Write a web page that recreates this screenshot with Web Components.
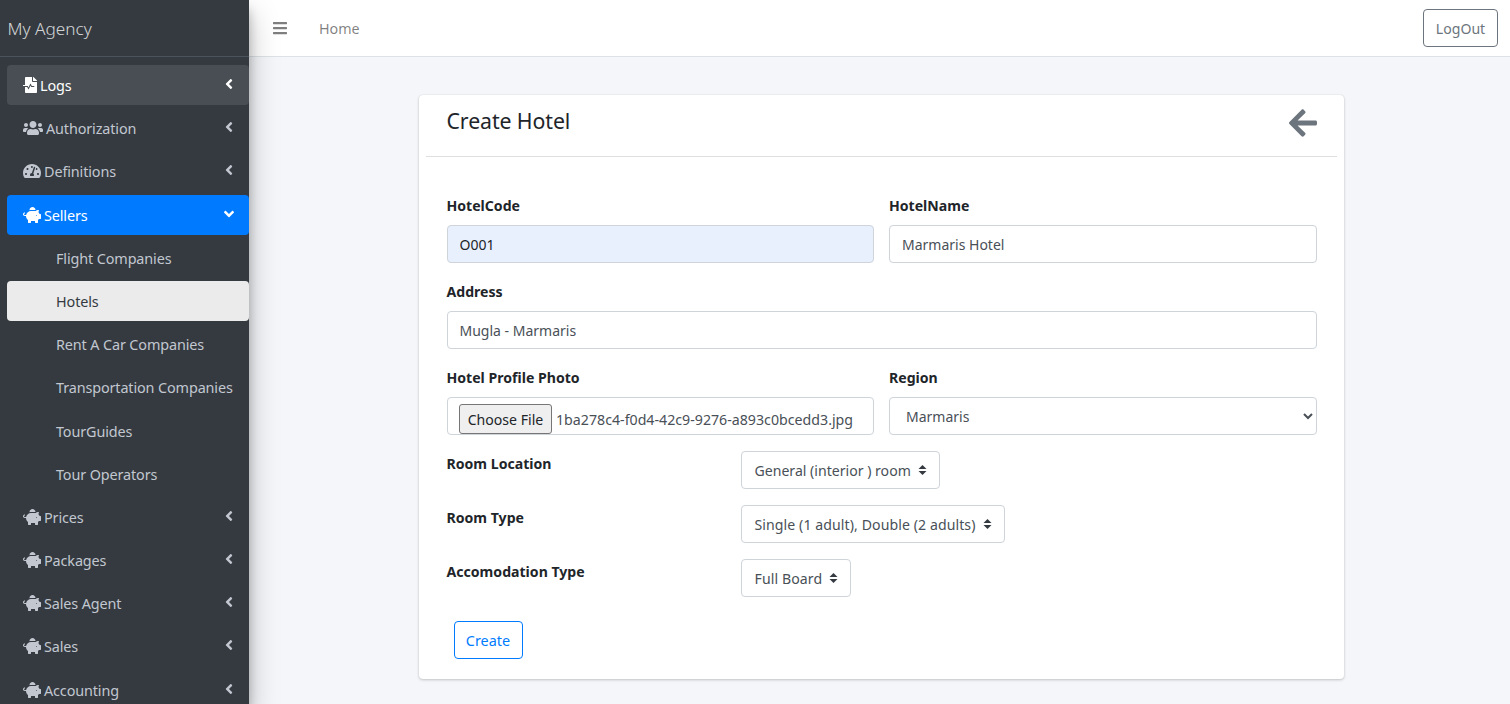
<!DOCTYPE html>
<html lang="en"><head><meta charset="utf-8"><title>Create Hotel</title>
<style>
html,body{margin:0;height:100%;overflow:hidden;background:#f4f6f9}
body{font-family:"Noto Sans","Open Sans",sans-serif;font-size:14.4px;color:#212529}
</style></head><body>
<app-shell>
  <side-bar slot="side" brand="My Agency">
    <nav-item icon="file" state="soft">Logs</nav-item>
    <nav-item icon="users">Authorization</nav-item>
    <nav-item icon="gauge">Definitions</nav-item>
    <nav-item icon="piggy" state="primary" open>Sellers</nav-item>
    <nav-item sub>Flight Companies</nav-item>
    <nav-item sub state="light">Hotels</nav-item>
    <nav-item sub>Rent A Car Companies</nav-item>
    <nav-item sub>Transportation Companies</nav-item>
    <nav-item sub>TourGuides</nav-item>
    <nav-item sub>Tour Operators</nav-item>
    <nav-item icon="piggy">Prices</nav-item>
    <nav-item icon="piggy">Packages</nav-item>
    <nav-item icon="piggy">Sales Agent</nav-item>
    <nav-item icon="piggy">Sales</nav-item>
    <nav-item icon="piggy">Accounting</nav-item>
  </side-bar>
  <top-bar slot="top"></top-bar>
  <form-card title="Create Hotel">
    <div style="display:grid;grid-template-columns:427.5px 428px;column-gap:15px">
      <form-field label="HotelCode"><text-box value="O001" autofill></text-box></form-field>
      <form-field label="HotelName"><text-box value="Marmaris Hotel"></text-box></form-field>
      <form-field label="Address" style="grid-column:1/3"><text-box value="Mugla - Marmaris"></text-box></form-field>
      <form-field label="Hotel Profile Photo"><file-box name="1ba278c4-f0d4-42c9-9276-a893c0bcedd3.jpg"></file-box></form-field>
      <form-field label="Region"><region-select value="Marmaris"></region-select></form-field>
    </div>
    <option-row label="Room Location" value="General (interior ) room"></option-row>
    <option-row label="Room Type" value="Single (1 adult), Double (2 adults)" track=".085"></option-row>
    <option-row label="Accomodation Type" value="Full Board" track=".1"></option-row>
    <submit-button>Create</submit-button>
  </form-card>
</app-shell>
<script>
const ICONS={
 file:[448,"M288 136V0H88C74.7 0 64 10.7 64 24v232H8c-4.4 0-8 3.6-8 8v16c0 4.4 3.6 8 8 8h140.9c3 0 5.8 1.7 7.2 4.4l19.9 39.8 56.8-113.7c2.9-5.9 11.4-5.9 14.3 0l34.7 69.5H352c8.8 0 16 7.2 16 16s-7.2 16-16 16h-89.9L240 275.8l-56.8 113.7c-2.9 5.9-11.4 5.9-14.3 0L134.1 320H64v168c0 13.3 10.7 24 24 24h336c13.3 0 24-10.7 24-24V160H312c-13.2 0-24-10.8-24-24zm153-31L343.1 7c-4.5-4.5-10.6-7-17-7H320v128h128v-6.1c0-6.3-2.5-12.4-7-16.9z"],
 users:[640,"M96 224c35.3 0 64-28.7 64-64s-28.7-64-64-64-64 28.7-64 64 28.7 64 64 64zm448 0c35.3 0 64-28.7 64-64s-28.7-64-64-64-64 28.7-64 64 28.7 64 64 64zm32 32h-64c-17.6 0-33.5 7.1-45.1 18.6 40.3 22.1 68.9 62 75.1 109.4h66c17.7 0 32-14.3 32-32v-32c0-35.3-28.7-64-64-64zm-256 0c61.9 0 112-50.1 112-112S381.9 32 320 32 208 82.1 208 144s50.1 112 112 112zm76.8 32h-8.3c-20.8 10-43.9 16-68.5 16s-47.6-6-68.5-16h-8.3C179.6 288 128 339.6 128 403.2V432c0 26.5 21.5 48 48 48h288c26.5 0 48-21.5 48-48v-28.8c0-63.6-51.6-115.2-115.2-115.2zm-223.7-13.4C161.5 263.1 145.6 256 128 256H64c-35.3 0-64 28.7-64 64v32c0 17.7 14.3 32 32 32h65.9c6.3-47.4 34.9-87.3 75.2-109.4z"],
 gauge:[576,"M288 32C128.94 32 0 160.94 0 320c0 52.8 14.25 102.26 39.06 144.8 5.61 9.62 16.3 15.2 27.44 15.2h443c11.14 0 21.83-5.58 27.44-15.2C561.75 422.26 576 372.8 576 320c0-159.06-128.94-288-288-288zm0 64c14.71 0 26.58 10.13 30.32 23.65-1.11 2.26-2.64 4.23-3.45 6.67l-9.22 27.67c-5.13 3.49-10.97 6.01-17.64 6.01-17.67 0-32-14.33-32-32S270.33 96 288 96zM96 384c-17.67 0-32-14.33-32-32s14.33-32 32-32 32 14.33 32 32-14.33 32-32 32zm48-160c-17.67 0-32-14.33-32-32s14.33-32 32-32 32 14.33 32 32-14.33 32-32 32zm246.77-72.41l-61.33 184C343.13 347.33 352 364.54 352 384c0 11.72-3.38 22.55-8.88 32H232.88c-5.5-9.45-8.88-20.28-8.88-32 0-33.94 26.5-61.43 59.9-63.59l61.34-184.01c4.17-12.56 17.73-19.45 30.36-15.17 12.57 4.19 19.35 17.79 15.17 30.36zm14.66 57.2l15.52-46.55c3.47-1.29 7.13-2.23 11.05-2.23 17.67 0 32 14.33 32 32s-14.33 32-32 32c-11.38-.01-20.89-6.28-26.57-15.22zM480 384c-17.67 0-32-14.33-32-32s14.33-32 32-32 32 14.33 32 32-14.33 32-32 32z"],
 piggy:[576,"M560 224h-29.5c-8.8-20-21.6-37.7-37.4-52.5L512 96h-32c-29.4 0-55.4 13.5-73 34.3-7.6-1.1-15.1-2.3-23-2.3H256c-77.4 0-141.9 55-156.8 128H56c-14.8 0-26.5-13.5-23.5-28.8C34.7 215.8 45.4 208 57 208h1c3.3 0 6-2.7 6-6v-20c0-3.3-2.7-6-6-6-28.5 0-53.9 20.4-57.5 48.6C-3.9 258.8 22.7 288 56 288h40c0 52.2 25.4 98.1 64 127.3V496c0 8.8 7.2 16 16 16h64c8.8 0 16-7.2 16-16v-48h128v48c0 8.8 7.2 16 16 16h64c8.8 0 16-7.2 16-16v-80.7c11.8-8.9 22.3-19.4 31.3-31.3H560c8.8 0 16-7.2 16-16V240c0-8.8-7.2-16-16-16zm-128 64c-8.8 0-16-7.2-16-16s7.2-16 16-16 16 7.2 16 16-7.2 16-16 16zM256 96h128c5.4 0 10.7.4 15.9.8 0-.3.1-.5.1-.8 0-53-43-96-96-96s-96 43-96 96c0 2.1.5 4.1.6 6.2 15.2-3.9 31-6.2 47.4-6.2z"],
 left:[256,"M31.7 239l136-136c9.4-9.4 24.6-9.4 33.9 0l22.6 22.6c9.4 9.4 9.4 24.6 0 33.9L127.9 256l96.4 96.4c9.4 9.4 9.4 24.6 0 33.9L201.7 409c-9.4 9.4-24.6 9.4-33.9 0l-136-136c-9.5-9.4-9.5-24.6-.1-34z"],
 down:[320,"M143 352.3L7 216.3c-9.4-9.4-9.4-24.6 0-33.9l22.6-22.6c9.4-9.4 24.6-9.4 33.9 0l96.4 96.4 96.4-96.4c9.4-9.4 24.6-9.4 33.9 0l22.6 22.6c9.4 9.4 9.4 24.6 0 33.9l-136 136c-9.2 9.4-24.4 9.4-33.8 0z"],
 bars:[448,"M16 132h416c8.837 0 16-7.163 16-16V76c0-8.837-7.163-16-16-16H16C7.163 60 0 67.163 0 76v40c0 8.837 7.163 16 16 16zm0 160h416c8.837 0 16-7.163 16-16v-40c0-8.837-7.163-16-16-16H16c-8.837 0-16 7.163-16 16v40c0 8.837 7.163 16 16 16zm0 160h416c8.837 0 16-7.163 16-16v-40c0-8.837-7.163-16-16-16H16c-8.837 0-16 7.163-16 16v40c0 8.837 7.163 16 16 16z"],
 back:[448,"M257.5 445.1l-22.2 22.2c-9.4 9.4-24.6 9.4-33.9 0L7 273c-9.4-9.4-9.4-24.6 0-33.9L201.4 44.7c9.4-9.4 24.6-9.4 33.9 0l22.2 22.2c9.5 9.5 9.3 25-.4 34.3L136.6 216H424c13.3 0 24 10.7 24 24v32c0 13.3-10.7 24-24 24H136.6l120.5 114.8c9.8 9.3 10 24.8.4 34.3z"]
};
const svg=(n,size=16)=>{const [w,d]=ICONS[n];return `<svg width="${w/512*size}" height="${size}" viewBox="0 0 ${w} 512" fill="currentColor" aria-hidden="true" style="display:block;flex:none"><path d="${d}"/></svg>`};
const FONT='"Noto Sans","Open Sans",sans-serif';
function reg(name,render){customElements.define(name,class extends HTMLElement{
  connectedCallback(){if(this.shadowRoot)return;this.attachShadow({mode:"open"}).innerHTML=render(this)}
})}
reg("app-shell",()=>`<style>
:host{display:grid;grid-template-columns:249px 1fr;grid-template-rows:57px 1fr;height:704px;overflow:hidden}
.side{grid-row:1/3;position:relative;z-index:2;min-height:0;min-width:0}
main{min-width:0;min-height:0;overflow:hidden;padding:38px 0 0 170px}
</style><div class="side"><slot name="side"></slot></div><slot name="top"></slot><main><slot></slot></main>`);
reg("side-bar",h=>`<style>
:host{display:flex;flex-direction:column;height:704px;background:#343a40;box-shadow:0 14px 28px rgba(0,0,0,.25),0 10px 10px rgba(0,0,0,.22)}
.brand{height:56px;box-sizing:border-box;flex:none;padding:0 7.5px;display:flex;align-items:center;font-size:17.2px;font-weight:300;color:rgba(255,255,255,.8);font-family:${FONT}}
hr{margin:0;border:0;border-top:1px solid #4b545c;flex:none}
nav{display:flex;flex-direction:column;gap:3.2px;padding:8px 0 0 7px;overflow:hidden;min-height:0}
</style><div class="brand">${h.getAttribute("brand")}</div><hr><nav><slot></slot></nav>`);
reg("nav-item",h=>{
 const st=h.getAttribute("state"),sub=h.hasAttribute("sub"),ic=h.getAttribute("icon");
 const bg={soft:"rgba(255,255,255,.1)",primary:"#007bff",light:"rgba(255,255,255,.9)"}[st]||"transparent";
 const col={soft:"#fff",primary:"#fff",light:"#343a40"}[st]||"#c2c7d0";
 return `<style>
 :host{display:flex;flex:none;align-items:center;gap:3px;box-sizing:border-box;width:242px;height:40px;border-radius:4px;background:${bg};color:${col};padding:0 15px 0 ${sub?49:16}px;font:14.4px/24px ${FONT};letter-spacing:-.12px}
 .t{flex:1;white-space:nowrap;padding-top:2px}
 .c{width:10px;display:flex;justify-content:center;padding-bottom:2px}
 </style>${ic?svg(ic):""}<span class="t"><slot></slot></span>${sub?"":`<span class="c">${h.hasAttribute("open")?svg("down"):svg("left")}</span>`}`});
reg("top-bar",()=>`<style>
:host{display:flex;align-items:center;height:57px;box-sizing:border-box;background:#fff;border-bottom:1px solid #dee2e6;padding:0 12px 0 24px;font:14.3px/24px ${FONT}}
.b{color:rgba(0,0,0,.5)}
.h{margin-left:32px;color:rgba(0,0,0,.5);flex:1;padding-top:2px}
button{height:38px;width:75px;box-sizing:border-box;background:#fff;border:1px solid #6c757d;border-radius:4px;color:#6c757d;font:14.1px/24px ${FONT};padding:2px 0 0}
</style><span class="b">${svg("bars")}</span><span class="h">Home</span><button type="button">LogOut</button>`);
reg("form-card",h=>`<style>
:host{display:block;width:925px;height:584px;box-sizing:border-box;background:#fff;border-radius:4px;box-shadow:0 0 1px rgba(0,0,0,.125),0 1px 3px rgba(0,0,0,.2)}
header{height:62px;box-sizing:border-box;margin:0 7px;border-bottom:1px solid rgba(0,0,0,.125);display:flex;justify-content:space-between;padding:8px 20px 0 20.5px;color:#212529}
h3{margin:0;font:400 21.3px/36px ${FONT};letter-spacing:-.1px}
.a{color:#6c757d;height:32px;margin-top:-3px;padding-top:7px}
.body{padding:36px 27px 20px 27.5px}
</style><header><h3>${h.getAttribute("title")}</h3><span class="a">${svg("back",32)}</span></header><div class="body"><slot></slot></div>`);
reg("form-field",h=>`<style>
:host{display:block;margin-bottom:16px}
label{display:block;font:700 14.1px/24px ${FONT};padding-top:1px;margin-bottom:7px;color:#212529}
</style><label>${h.getAttribute("label")}</label><slot></slot>`);
const box=`box-sizing:border-box;height:38px;border:1px solid #ced4da;border-radius:4px;background:#fff;color:#495057;font:14px/24px ${FONT};`;
reg("text-box",h=>`<style>
:host{display:block}
input{${box}display:block;width:100%;padding:6px 12px;outline:0}
input.af{background:#e8f0fe;color:#212529}
</style><input type="text" class="${h.hasAttribute("autofill")?"af":""}" value="${h.getAttribute("value")}">`);
reg("file-box",h=>`<style>
:host{${box}display:flex;align-items:flex-start;padding:6px 12px 6px 11.5px;overflow:hidden;white-space:nowrap}
button{box-sizing:border-box;width:93px;height:30px;flex:none;margin-right:4px;background:#efefef;border:1px solid #767676;border-radius:3px;color:#212529;font:14.1px ${FONT};padding:1px 0 0}
span{line-height:31px;font-size:14.2px}
</style><button type="button">Choose File</button><span>${h.getAttribute("name")}</span>`);
reg("region-select",h=>`<style>
:host{display:block}
select{${box}display:block;width:100%;padding:6px 12px;outline:0}
</style><select><option>${h.getAttribute("value")}</option></select>`);
reg("option-row",h=>`<style>
:host{display:grid;grid-template-columns:294px auto;justify-content:start;margin-bottom:16px}
label{font:700 14.1px/24px ${FONT};color:#212529;padding-top:1px}
button{${box}font-size:14.1px;display:inline-flex;align-items:center;gap:7px;padding:0 12px 0 13px;white-space:nowrap}
b{font-weight:400;padding-top:2px;letter-spacing:${h.getAttribute("track")||0}px}
</style><label>${h.getAttribute("label")}</label><div><button type="button"><b>${h.getAttribute("value")}</b><svg width="9" height="12" viewBox="0 0 9 12" fill="#343a40" aria-hidden="true"><path d="M4.5 1 8.5 5H.5zM4.5 11 .5 7h8z"/></svg></button></div>`);
reg("submit-button",()=>`<style>
:host{display:block;margin:24px 0 0 7px}
button{box-sizing:border-box;height:38px;width:69px;background:#fff;border:1px solid #007bff;border-radius:4px;color:#007bff;font:14.4px/24px ${FONT};padding:2px 0 0}
</style><button type="submit"><slot></slot></button>`);
</script>
</body></html>
